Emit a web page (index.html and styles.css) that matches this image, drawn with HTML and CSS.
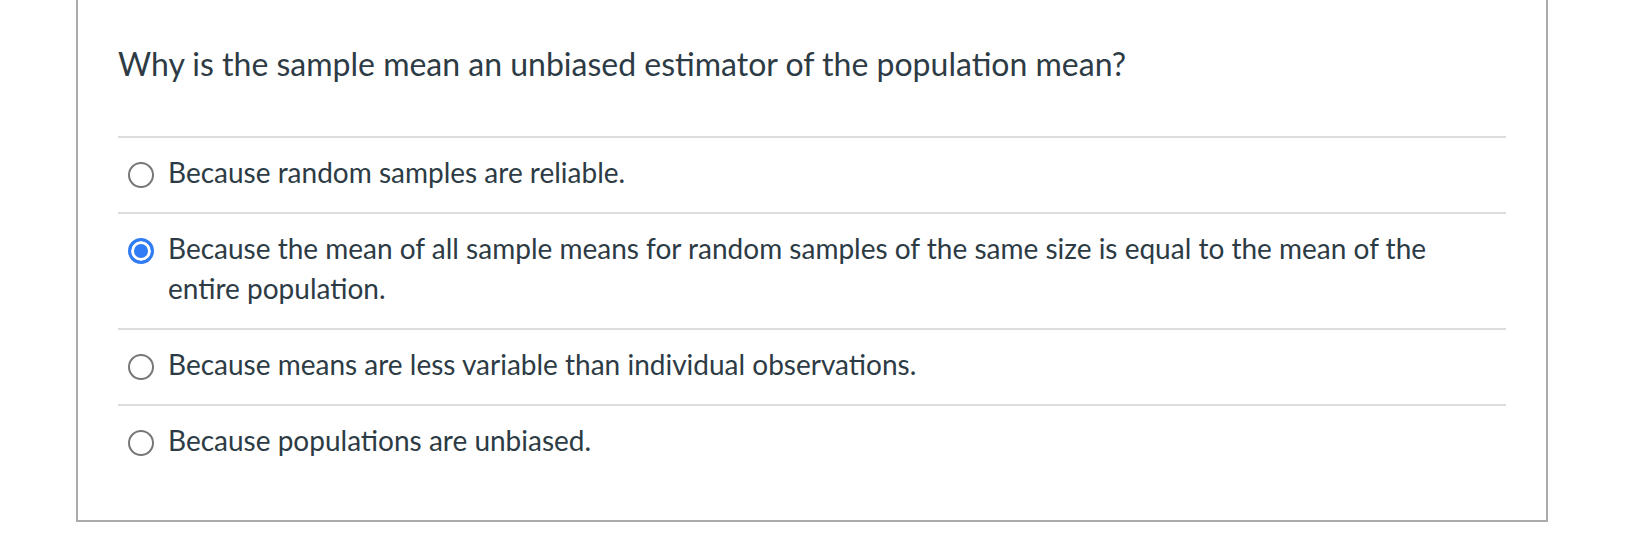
FILE: index.html
```html
<!DOCTYPE html>
<html lang="en">
<head>
    <meta charset="UTF-8">
    <meta name="viewport" content="width=device-width, initial-scale=1.0">
    <title>Quiz question</title>
    <link rel="stylesheet" href="styles.css">
</head>
<body>
    <div class="question">
        <div class="question-text">Why is the sample mean an unbiased estimator of the population mean?</div>
        <ul class="answers">
            <li>
                <label class="answer">
                    <input type="radio" name="q1">
                    <span class="answer-text">Because random samples are reliable.</span>
                </label>
            </li>
            <li>
                <label class="answer">
                    <input type="radio" name="q1" checked>
                    <span class="answer-text">Because the mean of all sample means for random samples of the same size is equal to the mean of the entire population.</span>
                </label>
            </li>
            <li>
                <label class="answer">
                    <input type="radio" name="q1">
                    <span class="answer-text">Because means are less variable than individual observations.</span>
                </label>
            </li>
            <li>
                <label class="answer">
                    <input type="radio" name="q1">
                    <span class="answer-text">Because populations are unbiased.</span>
                </label>
            </li>
        </ul>
    </div>
</body>
</html>
```

FILE: styles.css
```css
*{
    margin: 0;
    padding: 0;
    list-style: none;
    box-sizing: border-box;
}
body{
    background-color: #fff;
    font-family: Lato, "Open Sans", "Liberation Sans", sans-serif;
    color: #2d3b45;
}
.question{
    width: 1472px;
    margin: -20px 0 0 76px;
    padding: 58px 40px 40px;
    border: 2px solid #aaaaaa;
}
.question .question-text{
    font-size: 32px;
    line-height: 48px;
    margin-bottom: 48px;
}
.question .answer{
    display: flex;
    align-items: flex-start;
    padding: 14px 40px 20px 10px;
    border-top: 2px solid #dddddd;
    cursor: pointer;
}
.question .answer input{
    appearance: none;
    -webkit-appearance: none;
    flex: none;
    width: 26px;
    height: 26px;
    margin: 10px 14px 0 0;
    border: 2px solid #777777;
    border-radius: 50%;
    background-color: #fff;
    cursor: pointer;
}
.question .answer input:checked{
    border: 3px solid #2f7cf6;
    background-color: #2f7cf6;
    box-shadow: inset 0 0 0 3px #fff;
}
.question .answer-text{
    font-size: 28px;
    line-height: 40px;
}
```
